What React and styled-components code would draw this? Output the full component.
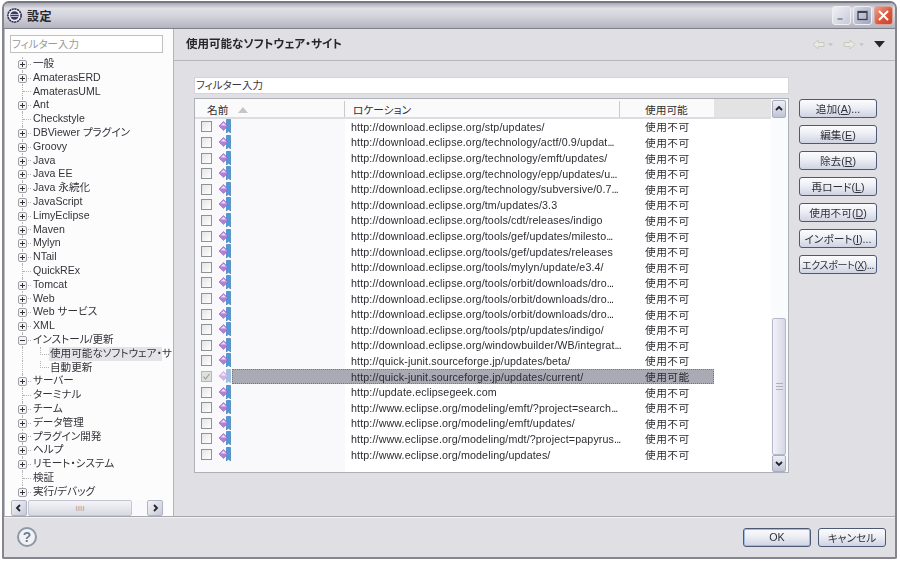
import React from "react";
import styled, { createGlobalStyle } from "styled-components";

const Global = createGlobalStyle`
  html, body { margin: 0; padding: 0; background: #fff; }
  #root { width: 900px; height: 562px; overflow: hidden; }
  * { box-sizing: border-box; }
`;
const FONT = `"Liberation Sans", "Noto Sans CJK JP", sans-serif`;

const Screen = styled.div`
  width: 900px; height: 562px; padding: 1px 3px 3px 2px;
  font-family: ${FONT}; font-size: 11px; color: #303034;
  font-feature-settings: "palt";
  filter: blur(0.4px);
`;
const Window = styled.div`
  width: 100%; height: 100%; display: flex; flex-direction: column;
  border: 2px solid #85858f; border-top-color: #777784; border-radius: 7px 7px 2px 2px;
  background: #e0e0e4; overflow: hidden;
`;
const TitleBar = styled.header`
  height: 26px; flex: none; display: flex; align-items: center; padding: 0 2px 0 3px;
  background: linear-gradient(#a9a9b6 0, #dfdfe6 22%, #d2d2da 55%, #b3b3bf 100%);
  border-bottom: 1px solid #80808c;
`;
const TitleText = styled.span`
  margin-left: 5px; font-size: 12px; font-weight: 700; color: #26262c; letter-spacing: .5px;
`;
const WinButtons = styled.div`
  margin-left: auto; display: flex; gap: 2px;
`;
const WinButton = styled.div`
  width: 19px; height: 19px; border-radius: 3px; border: 1px solid ${p => (p.$close ? "#d9a59a" : "#f0f0f4")};
  display: flex; align-items: center; justify-content: center;
  background: ${p => p.$close
    ? "linear-gradient(135deg,#eaa08c,#d9543a 60%,#c8452e)"
    : p.$active
      ? "linear-gradient(135deg,#d8dae6,#9fa5c0)"
      : "linear-gradient(135deg,#f0f0f6,#c6cad8)"};
`;
const Body = styled.div`
  flex: 1; min-height: 0; display: flex; border-bottom: 1px solid #a6a6ae;
`;
const Side = styled.aside`
  width: 170px; flex: none; display: flex; flex-direction: column; background: #fcfcfd;
  border-right: 1px solid #b3b3ba; padding: 6px 0 0 5px; border-left: 1px solid #bdbdc4;
`;
const SideFilter = styled.div`
  width: 153px; height: 18px; line-height: 16px; border: 1px solid #c0c0c2; background: #fff;
  color: #9a9a9e; font-size: 10.5px; padding-left: 1px; flex: none;
`;
const Tree = styled.ul`
  list-style: none; margin: 4px 0 0; padding: 0; flex: 1; overflow: hidden; position: relative;
`;
const TreeRow = styled.li`
  height: 13.8px; line-height: 13.8px; display: flex; align-items: center; white-space: nowrap;
  font-size: 10.6px; color: #33333a; padding-left: 8px;
`;
const Guide = styled.span`
  width: 9px; height: 100%; flex: none; position: relative; margin-right: 5px;
  &::before { content: ""; position: absolute; left: 4px; top: 0; bottom: ${p => (p.$last ? "50%" : 0)}; border-left: 1px dotted #b4b4b4; }
  &::after { content: ""; position: absolute; left: 5px; top: 50%; width: 8px; border-top: 1px dotted #b4b4b4; }
`;
const Expander = styled.span`
  position: absolute; left: 0; top: 3px; width: 9px; height: 9px; z-index: 1;
  border: 1px solid #a0a0a8; border-radius: 2px; background: #f4f4f6;
  &::before { content: ""; position: absolute; left: 1px; right: 1px; top: 3px; height: 1px; background: #333; }
  &::after { content: ${p => (p.$open ? "none" : '""')}; position: absolute; top: 1px; bottom: 1px; left: 3px; width: 1px; background: #333; }
`;
const ChildGuide = styled.span`
  width: 31px; height: 100%; flex: none; position: relative;
  &::before { content: ""; position: absolute; left: 4px; top: 0; bottom: 0; border-left: 1px dotted #b4b4b4; }
  &::after { content: ""; position: absolute; left: 22px; top: 0; height: 50%; width: 8px; border-left: 1px dotted #b4b4b4; border-bottom: 1px dotted #b4b4b4; }
`;
const TreeLabel = styled.span`
  padding: 0 1px;
  background: ${p => (p.$selected ? "#e4e4e8" : "transparent")};
  ${p => (p.$selected ? "width: 113px;" : "")}
`;
const HScroll = styled.div`
  height: 16px; flex: none; width: 153px; margin: 0 0 0 1px; display: flex; background: #fafafc;
`;
const ScrollBtn = styled.div`
  width: 16px; height: 16px; flex: none; border: 1px solid #b0b4c4; border-radius: 2px;
  display: flex; align-items: center; justify-content: center;
  background: linear-gradient(135deg,#f4f4f8,#c6c9d8);
`;
const HThumb = styled.div`
  width: 104px; margin: 0 15px 0 1px; border: 1px solid #c4c6d2; border-radius: 2px;
  background: linear-gradient(#f4f4f8,#d8d9e2);
  display: flex; align-items: center; justify-content: center;
  color: #a0a0a8; font-size: 8px;
`;
const Main = styled.main`
  flex: 1; min-width: 0; display: flex; flex-direction: column;
`;
const MainHead = styled.div`
  height: 32px; flex: none; display: flex; align-items: center; padding: 0 10px 0 12px;
  border-bottom: 1px solid #b6b6bc; margin-bottom: 16px;
`;
const MainTitle = styled.h2`
  margin: 0 0 4px; font-size: 11.5px; font-weight: 700; color: #26262c;
`;
const NavIcons = styled.div`
  margin-left: auto; display: flex; align-items: center; gap: 3px;
`;
const NavGap = styled.span`
  width: 4px;
`;
const Flip = styled.span`
  display: flex; transform: scaleX(-1);
`;
const Content = styled.div`
  flex: 1; padding: 0 18px 0 20px; min-height: 0; display: flex; flex-direction: column;
`;
const SiteFilter = styled.div`
  width: 595px; height: 17px; line-height: 15px; background: #fff; border: 1px solid #d4d4d8;
  font-size: 10.5px; padding-left: 1px; flex: none; color: #38383e;
`;
const Split = styled.div`
  display: flex; margin-top: 4px;
`;
const TableFrame = styled.div`
  width: 595px; height: 375px; border: 1px solid #aeb0b8; background: #fff;
  display: flex; flex: none;
`;
const TableArea = styled.div`
  width: 576px; flex: none; display: flex; flex-direction: column;
`;
const TableHead = styled.div`
  height: 20px; flex: none; display: flex; border-bottom: 2px solid #dcdce2; background: #fafafb;
`;
const HeadCell = styled.div`
  width: ${p => p.$w}px; flex: none; display: flex; align-items: center;
  padding-left: ${p => p.$pl}px; padding-top: 1px; border-right: 1px solid ${p => (p.$plain ? "transparent" : "#c9c9ce")};
  font-size: 10.7px; margin: 2px 0 0;
`;
const HeadFill = styled.div`
  flex: 1; background: #e2e3e2;
`;
const SortMark = styled.span`
  margin-left: 10px; width: 0; height: 0;
  border-left: 5px solid transparent; border-right: 5px solid transparent; border-bottom: 6px solid #c5c5c8;
`;
const RowsArea = styled.div`
  flex: 1; background: linear-gradient(90deg, #f9f9fb 150px, #fff 150px);
`;
const Row = styled.div`
  height: 15.62px; display: flex; align-items: center; position: relative; white-space: nowrap;
`;
const Check = styled.div`
  width: 11px; height: 11px; margin-left: 6px; flex: none; border: 1px solid ${p => (p.$on ? "#b4b8b4" : "#8f9296")};
  background: ${p => (p.$on ? "#dde0dd" : "linear-gradient(135deg,#e4e4e6,#fff)")};
  display: flex; align-items: center; justify-content: center;
`;
const IconSlot = styled.div`
  width: 13px; height: 15px; margin-left: 7px; flex: none; opacity: ${p => (p.$dim ? 0.55 : 1)};
`;
const NameCell = styled.div`
  width: 113px; height: 15px; flex: none; margin-left: 1px;
`;
const UrlCell = styled.div`
  flex: none; width: 274px; padding-left: 5px; font-size: 10.7px; letter-spacing: .13px; color: #2c2c32;
`;
const StateCell = styled.div`
  flex: none; width: 94px; padding-left: 25px; font-size: 10.7px; letter-spacing: .45px; color: #2c2c32;
`;
const Dots = styled.span`
  letter-spacing: -.9px;
`;
const Selection = styled.div`
  position: absolute; left: 37px; top: 0; width: 482px; height: 15.62px; background: #a9aab4;
  outline: 1px dotted #77777f; outline-offset: -1px;
`;
const RowContent = styled.div`
  position: relative; display: flex; align-items: center; height: 100%;
`;
const VScroll = styled.div`
  width: 17px; flex: none; display: flex; flex-direction: column; padding: 1px 1px 0 1px; background: #fafbfc;
`;
const VBtn = styled(ScrollBtn)`
  width: 14px; height: ${p => p.$h}px; background: linear-gradient(#eef0f6,#bfc4d6); border-color: #a8acc0;
`;
const VThumb = styled.div`
  width: 14px; height: 137px; margin-top: auto; border: 1px solid #b4b8cc; border-radius: 2px;
  background: linear-gradient(90deg,#f2f3f8,#d5d7e4);
  display: flex; align-items: center; justify-content: center;
`;
const Grip = styled.span`
  width: 7px; height: 7px; border-top: 1px solid #b0b0b8; border-bottom: 1px solid #b0b0b8;
  position: relative;
  &::before { content: ""; position: absolute; left: 0; right: 0; top: 2px; border-top: 1px solid #b0b0b8; }
`;
const ButtonCol = styled.div`
  margin-left: 10px; display: flex; flex-direction: column; gap: 7px; padding-top: 1px;
`;
const Button = styled.button`
  width: ${p => p.$w || 78}px; height: 19px; padding: 0; font-family: ${FONT};
  font-size: ${p => (p.$tight ? 10 : 10.7)}px; letter-spacing: ${p => (p.$tight ? "-.35px" : "0")};
  font-feature-settings: "palt";
  color: #30303a; border: 1px solid #4c5a78; border-radius: 3px; white-space: nowrap;
  background: linear-gradient(#fcfcfe 0,#eceef4 45%,#cfd3e2 100%);
  box-shadow: ${p => (p.$def ? "inset 0 0 0 1px #9dbbe0" : "none")};
  u { text-underline-offset: 1px; }
`;
const Foot = styled.footer`
  height: 40px; flex: none; display: flex; align-items: center; padding: 0 9px;
  border-top: 1px solid #f2f2f5;
`;
const HelpBtn = styled.div`
  width: 20px; height: 20px; margin: 0 0 1px 4px;
  border: 2px solid #8f98a8; border-radius: 50%; background: #f0f2f6; color: #6d7a90;
  font-weight: 700; font-size: 14px; line-height: 16px; text-align: center;
`;
const FootBtns = styled.div`
  margin-left: auto; display: flex; gap: 7px; margin-bottom: 1px;
`;

const tree = [
  ["一般", 1], ["AmaterasERD", 1], ["AmaterasUML", 0], ["Ant", 1], ["Checkstyle", 0],
  ["DBViewer プラグイン", 1], ["Groovy", 1], ["Java", 1], ["Java EE", 1], ["Java 永続化", 1],
  ["JavaScript", 1], ["LimyEclipse", 1], ["Maven", 1], ["Mylyn", 1], ["NTail", 1],
  ["QuickREx", 0], ["Tomcat", 1], ["Web", 1], ["Web サービス", 1], ["XML", 1],
  ["インストール/更新", 2], ["使用可能なソフトウェア・サ", 3], ["自動更新", 4], ["サーバー", 1], ["ターミナル", 0],
  ["チーム", 1], ["データ管理", 1], ["プラグイン開発", 1], ["ヘルプ", 1], ["リモート・システム", 1],
  ["検証", 0], ["実行/デバッグ", 1],
];
const D = "http://download.eclipse.org/";
const W = "http://www.eclipse.org/modeling/";
const rows = [
  D + "stp/updates/", D + "technology/actf/0.9/updat...", D + "technology/emft/updates/",
  D + "technology/epp/updates/u...", D + "technology/subversive/0.7...", D + "tm/updates/3.3",
  D + "tools/cdt/releases/indigo", D + "tools/gef/updates/milesto...", D + "tools/gef/updates/releases",
  D + "tools/mylyn/update/e3.4/", D + "tools/orbit/downloads/dro...", D + "tools/orbit/downloads/dro...",
  D + "tools/orbit/downloads/dro...", D + "tools/ptp/updates/indigo/", D + "tools/windowbuilder/WB/integrat...",
  "http://quick-junit.sourceforge.jp/updates/beta/", "http://quick-junit.sourceforge.jp/updates/current/",
  "http://update.eclipsegeek.com", W + "emft/?project=search...", W + "emft/updates/",
  W + "mdt/?project=papyrus...", W + "updates/",
];
rows[14] = D + "windowbuilder/WB/integrat...";

const SiteIcon = () => (
  <svg width="13" height="15" viewBox="0 0 13 15">
    <path d="M7.5 0.5 H11.5 V14 L9.5 12 L7.5 14 Z" fill="#4d9ad8" stroke="#2f6fae" strokeWidth=".6" />
    <path d="M0 7 L4.5 2.5 L9 7 L4.5 11.5 Z" fill="#b17fd6" stroke="#9563bd" strokeWidth=".6" />
    <path d="M1.7 6.6 L4.5 3.8 L7.3 6.6 Z" fill="#eedcf8" />
  </svg>
);
const Chevron = ({ dir }) => {
  const d = { up: "M1 5 L4 2 L7 5", down: "M1 2 L4 5 L7 2", left: "M5 1 L2 4 L5 7", right: "M3 1 L6 4 L3 7" }[dir];
  return (
    <svg width="8" height="8" viewBox="0 0 8 8"><path d={d} fill="none" stroke="#22242c" strokeWidth="1.8" /></svg>
  );
};
const AppIcon = () => (
  <svg width="15" height="15" viewBox="0 0 15 15">
    <circle cx="7.5" cy="7.5" r="6.6" fill="#f2f2f4" stroke="#2e2e52" strokeWidth="1.6" strokeDasharray="2.2 .6" />
    <circle cx="7.5" cy="7.5" r="4.2" fill="#3a3a66" />
    <path d="M3.4 6.5 H11.6 M3.6 8.5 H11.4" stroke="#e0e0ec" strokeWidth=".8" />
  </svg>
);
const NavArrow = () => (
  <svg width="13" height="11" viewBox="0 0 13 11">
    <path d="M1 5.5 L6 1 V3.5 H12 V7.5 H6 V10 Z" fill="#e8eadf" stroke="#c6c8c4" />
  </svg>
);
const Drop = ({ c = "#c4c4c8", w = 5 }) => (
  <svg width={w} height={w / 2 + 1} viewBox="0 0 10 6"><path d="M0 0 H10 L5 6 Z" fill={c} /></svg>
);

const TreeItem = ({ label, kind, last }) => {
  if (kind >= 3) {
    return (
      <TreeRow>
        <ChildGuide />
        <TreeLabel $selected={kind === 3}>{label}</TreeLabel>
      </TreeRow>
    );
  }
  return (
    <TreeRow>
      <Guide $last={last}>
        {kind > 0 && <Expander $open={kind === 2} />}
      </Guide>
      <TreeLabel>{label}</TreeLabel>
    </TreeRow>
  );
};

const Url = ({ text }) => {
  const cut = text.endsWith("...");
  return <>{cut ? text.slice(0, -3) : text}{cut && <Dots>...</Dots>}</>;
};

export default function App() {
  return (
    <Screen>
      <Global />
      <Window>
        <TitleBar>
          <AppIcon />
          <TitleText>設定</TitleText>
          <WinButtons>
            <WinButton>
              <svg width="11" height="11" viewBox="0 0 11 11"><rect x="1.5" y="8" width="5" height="2" fill="#8e96a8" /></svg>
            </WinButton>
            <WinButton $active>
              <svg width="11" height="11" viewBox="0 0 11 11"><rect x="1" y="1.5" width="9" height="8" fill="none" stroke="#3d4152" strokeWidth="1.3" /><rect x="1" y="1" width="9" height="2" fill="#3d4152" /></svg>
            </WinButton>
            <WinButton $close>
              <svg width="11" height="11" viewBox="0 0 11 11"><path d="M1 1 L10 10 M10 1 L1 10" stroke="#fff" strokeWidth="2" /></svg>
            </WinButton>
          </WinButtons>
        </TitleBar>
        <Body>
          <Side>
            <SideFilter>フィルター入力</SideFilter>
            <Tree>
              {tree.map(([l, k], i) => <TreeItem key={l} label={l} kind={k} last={i === tree.length - 1} />)}
            </Tree>
            <HScroll>
              <ScrollBtn><Chevron dir="left" /></ScrollBtn>
              <HThumb>IIII</HThumb>
              <ScrollBtn><Chevron dir="right" /></ScrollBtn>
            </HScroll>
          </Side>
          <Main>
            <MainHead>
              <MainTitle>使用可能なソフトウェア・サイト</MainTitle>
              <NavIcons>
                <NavArrow /><Drop />
                <NavGap />
                <Flip><NavArrow /></Flip><Drop />
                <NavGap />
                <Drop c="#26262e" w={11} />
              </NavIcons>
            </MainHead>
            <Content>
              <SiteFilter>フィルター入力</SiteFilter>
              <Split>
                <TableFrame>
                  <TableArea>
                    <TableHead>
                      <HeadCell $w={150} $pl={12}>名前<SortMark /></HeadCell>
                      <HeadCell $w={275} $pl={8}>ロケーション</HeadCell>
                      <HeadCell $w={94} $pl={25} $plain>使用可能</HeadCell>
                      <HeadFill />
                    </TableHead>
                    <RowsArea>
                      {rows.map((u, i) => (
                        <Row key={i}>
                          {i === 16 && <Selection />}
                          <RowContent>
                            <Check $on={i === 16}>
                              {i === 16 && <svg width="9" height="9" viewBox="0 0 9 9"><path d="M1.5 4.5 L3.5 7 L7.5 2" fill="none" stroke="#9aa09a" strokeWidth="1.2" /></svg>}
                            </Check>
                            <IconSlot $dim={i === 16}><SiteIcon /></IconSlot>
                            <NameCell />
                            <UrlCell><Url text={u} /></UrlCell>
                            <StateCell>{i === 16 ? "使用可能" : "使用不可"}</StateCell>
                          </RowContent>
                        </Row>
                      ))}
                    </RowsArea>
                  </TableArea>
                  <VScroll>
                    <VBtn $h={18}><Chevron dir="up" /></VBtn>
                    <VThumb><Grip /></VThumb>
                    <VBtn $h={17}><Chevron dir="down" /></VBtn>
                  </VScroll>
                </TableFrame>
                <ButtonCol>
                  <Button>追加(<u>A</u>)...</Button>
                  <Button>編集(<u>E</u>)</Button>
                  <Button>除去(<u>R</u>)</Button>
                  <Button>再ロード(<u>L</u>)</Button>
                  <Button>使用不可(<u>D</u>)</Button>
                  <Button>インポート(<u>I</u>)...</Button>
                  <Button $tight>エクスポート(<u>X</u>)...</Button>
                </ButtonCol>
              </Split>
            </Content>
          </Main>
        </Body>
        <Foot>
          <HelpBtn>?</HelpBtn>
          <FootBtns>
            <Button $w={68} $def>OK</Button>
            <Button $w={68}>キャンセル</Button>
          </FootBtns>
        </Foot>
      </Window>
    </Screen>
  );
}
